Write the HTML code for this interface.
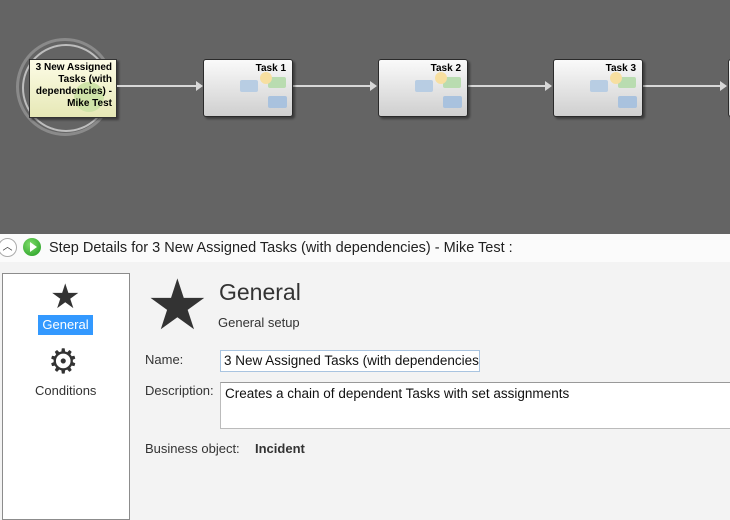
<!DOCTYPE html>
<html><head><style>
body{margin:0;width:730px;height:513px;overflow:hidden;background:#f3f3f3;font-family:"Liberation Sans",sans-serif;position:relative}
.dark{position:absolute;left:0;top:0;width:730px;height:234px;background:#646464}
.task{position:absolute;top:59px;width:88px;height:56px;border:1px solid #2a2a2a;border-radius:3px;background:linear-gradient(#fafafa,#cfcfcf);box-shadow:2px 2px 2px rgba(0,0,0,.4)}
.task b{position:absolute;right:6px;top:3px;font-size:10px}
.ic{position:absolute;border-radius:2px}
.line{position:absolute;top:85px;height:2px;background:#d8d8d8}
.arr{position:absolute;top:81px;width:0;height:0;border-left:7px solid #d8d8d8;border-top:5px solid transparent;border-bottom:5px solid transparent}
.a{position:absolute;font-size:13px;color:#333}
</style></head><body>
<div class="dark"></div>
<div style="position:absolute;left:16px;top:38px;width:98px;height:98px;border-radius:50%;border:3px solid #8a8a8a;box-sizing:border-box"></div>
<div style="position:absolute;left:22px;top:44px;width:88px;height:88px;border-radius:50%;border:2px solid #bdbdbd;box-sizing:border-box"></div>
<div style="position:absolute;left:29px;top:59px;width:86px;height:57px;border:1px solid #333;background:linear-gradient(#fdfce6,#e6e8b6);box-shadow:2px 2px 2px rgba(0,0,0,.4)">
<div style="position:absolute;left:44px;top:22px;width:30px;height:30px;border-radius:50%;background:#cfe3a8"></div>
<div style="position:absolute;right:4px;top:2px;text-align:right;font-size:10px;font-weight:bold;line-height:12px">3 New Assigned<br>Tasks (with<br>dependencies) -<br>Mike Test</div></div>
<div class="line" style="left:117px;width:80px"></div><div class="arr" style="left:196px"></div>
<div class="line" style="left:293px;width:78px"></div><div class="arr" style="left:370px"></div>
<div class="line" style="left:468px;width:78px"></div><div class="arr" style="left:545px"></div>
<div class="line" style="left:643px;width:78px"></div><div class="arr" style="left:720px"></div>
<div class="task" style="left:203px"><b>Task 1</b><div class="ic" style="left:36px;top:20px;width:18px;height:12px;background:#b8cde3"></div><div class="ic" style="left:64px;top:17px;width:18px;height:11px;background:#b9dcb0"></div><div class="ic" style="left:64px;top:36px;width:19px;height:12px;background:#a9c2de"></div><div class="ic" style="left:56px;top:12px;width:12px;height:12px;border-radius:50%;background:#f7dfa0"></div></div>
<div class="task" style="left:378px"><b>Task 2</b><div class="ic" style="left:36px;top:20px;width:18px;height:12px;background:#b8cde3"></div><div class="ic" style="left:64px;top:17px;width:18px;height:11px;background:#b9dcb0"></div><div class="ic" style="left:64px;top:36px;width:19px;height:12px;background:#a9c2de"></div><div class="ic" style="left:56px;top:12px;width:12px;height:12px;border-radius:50%;background:#f7dfa0"></div></div>
<div class="task" style="left:553px"><b>Task 3</b><div class="ic" style="left:36px;top:20px;width:18px;height:12px;background:#b8cde3"></div><div class="ic" style="left:64px;top:17px;width:18px;height:11px;background:#b9dcb0"></div><div class="ic" style="left:64px;top:36px;width:19px;height:12px;background:#a9c2de"></div><div class="ic" style="left:56px;top:12px;width:12px;height:12px;border-radius:50%;background:#f7dfa0"></div></div>
<div class="task" style="left:728px"></div>
<div style="position:absolute;left:0;top:234px;width:730px;height:28px;background:#fbfbfb"></div>
<div style="position:absolute;left:-2px;top:238px;width:17px;height:17px;border:1px solid #aaa;border-radius:50%;background:#fff;font-size:10px;text-align:center;line-height:17px;color:#333">︿</div>
<div style="position:absolute;left:23px;top:238px;width:18px;height:18px;border-radius:50%;background:radial-gradient(circle at 40% 35%,#7fdc6a,#1f9a1f)"><div style="position:absolute;left:7px;top:4px;border-left:7px solid #fff;border-top:5px solid transparent;border-bottom:5px solid transparent"></div></div>
<div style="position:absolute;left:49px;top:240px;font-size:14.5px;color:#222">Step Details for 3 New Assigned Tasks (with dependencies) - Mike Test :</div>
<div style="position:absolute;left:2px;top:273px;width:126px;height:245px;border:1px solid #8c8c8c;background:#fff"></div>
<div style="position:absolute;left:50px;top:280px;font-size:34px;line-height:34px;color:#333">★</div>
<div style="position:absolute;left:38px;top:315px;width:55px;height:20px;background:#3399ff;color:#fff;font-size:13px;text-align:center;line-height:20px">General</div>
<div style="position:absolute;left:48px;top:345px;font-size:34px;line-height:34px;color:#333">⚙</div>
<div style="position:absolute;left:35px;top:383px;font-size:13px;color:#333">Conditions</div>
<div style="position:absolute;left:146px;top:270px;font-size:70px;line-height:70px;color:#333">★</div>
<div style="position:absolute;left:219px;top:279px;font-size:23px;color:#333">General</div>
<div class="a" style="left:218px;top:315px">General setup</div>
<div class="a" style="left:145px;top:352px">Name:</div>
<div style="position:absolute;left:220px;top:350px;border:1px solid #a9c4e0;background:#fff;font-size:13.5px;line-height:20px;padding-left:3px;box-sizing:border-box;overflow:hidden;white-space:nowrap;color:#111;width:260px;height:22px">3 New Assigned Tasks (with dependencies)</div>
<div class="a" style="left:145px;top:383px">Description:</div>
<div style="position:absolute;left:220px;top:382px;width:520px;height:47px;border:1px solid #bbb;border-top-color:#999;background:#fff;font-size:13.5px;padding:3px 4px;box-sizing:border-box;color:#111">Creates a chain of dependent Tasks with set assignments</div>
<div class="a" style="left:145px;top:441px">Business object:</div>
<div class="a" style="left:255px;top:441px;font-weight:bold">Incident</div>
</body></html>
